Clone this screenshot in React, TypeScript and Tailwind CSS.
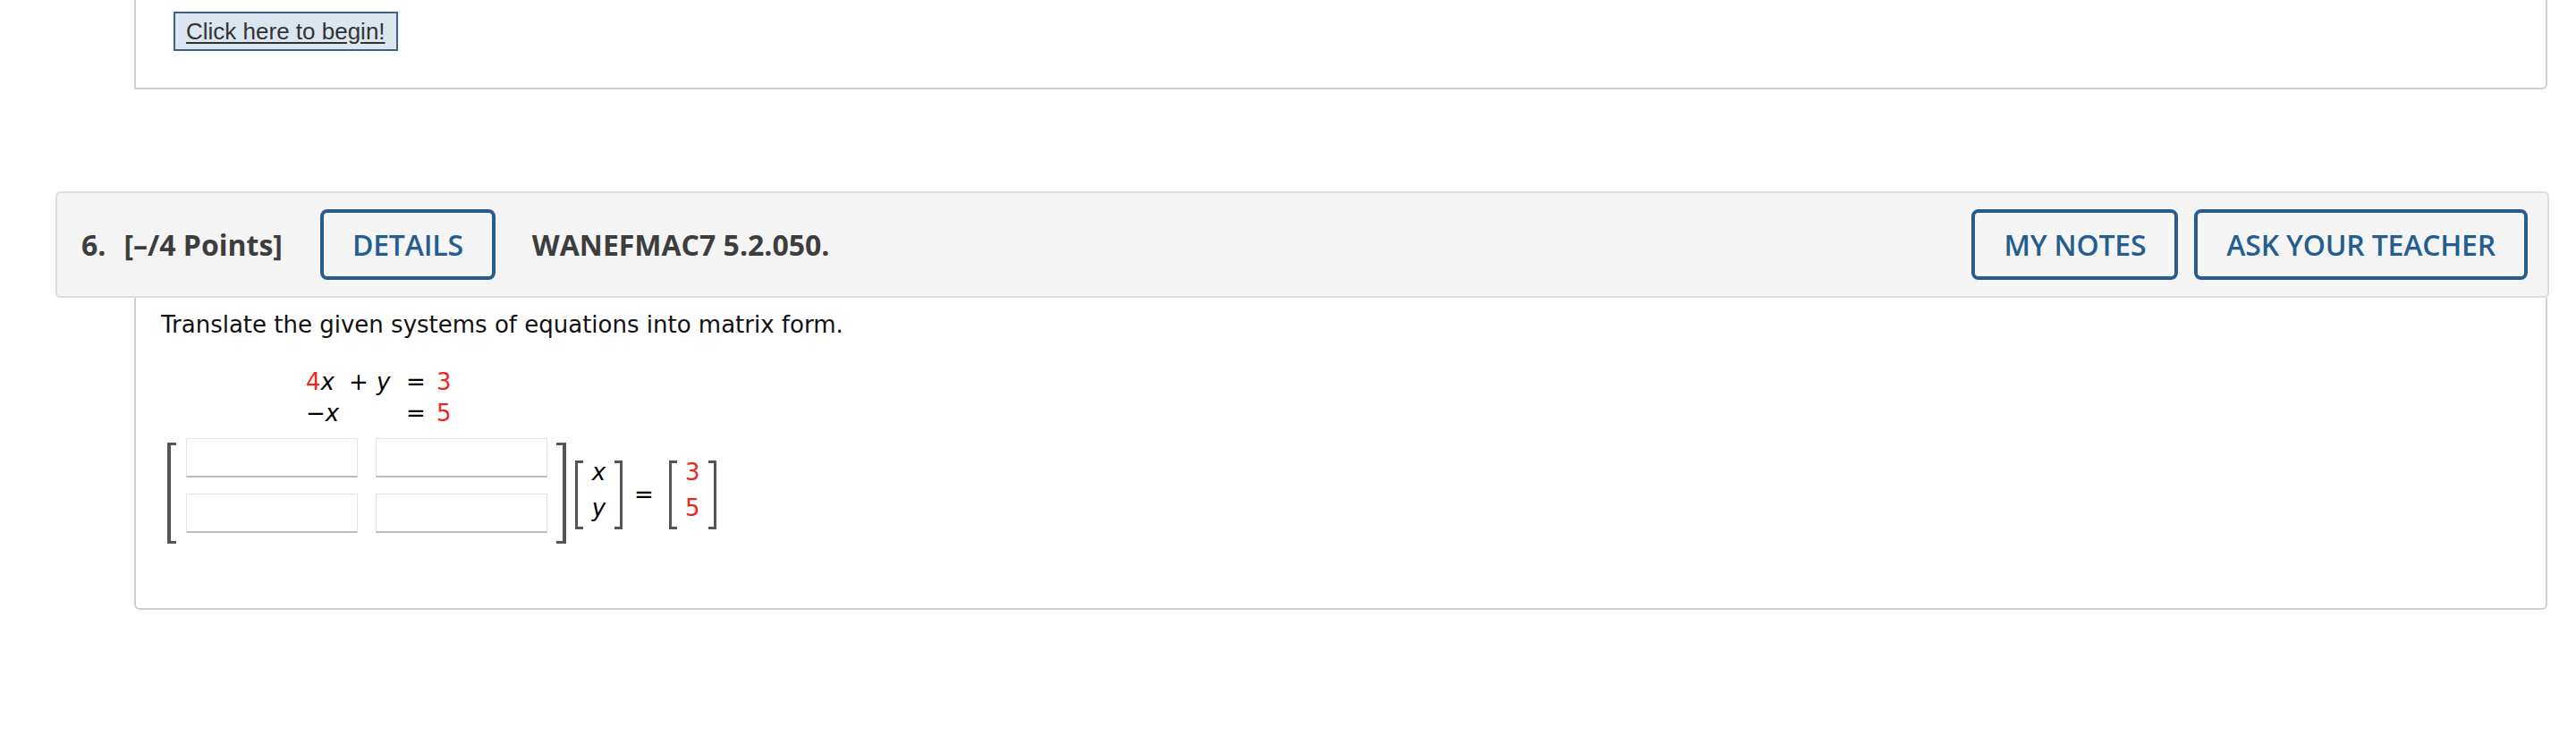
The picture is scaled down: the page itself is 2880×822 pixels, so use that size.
import React from "react";

// Question card: header strip with point value and action buttons, then the
// prompt, the system of equations and the 2x2 matrix answer grid.

const BODY = "font-['DejaVu_Sans',Verdana,sans-serif]";
const HEAD = "font-['Open_Sans',sans-serif]";

function HeaderButton({ label }: { label: string }) {
  return (
    <button className={`${HEAD} h-[79px] px-[32px] border-[4px] border-[#245e91] rounded-[8px] text-[32px] font-semibold text-[#245e91] tracking-[-0.2px] bg-transparent`}>
      {label}
    </button>
  );
}

function AnswerBox() {
  return <div className="h-[44px] bg-white border border-[#e4e4e4] border-b-2 border-b-[#bcbcbc]" />;
}

function Vector({ top, bottom, red }: { top: string; bottom: string; red?: boolean }) {
  const tone = red ? "text-[#ea2a1e]" : "text-black italic";
  return (
    <div className="flex mt-[25px]">
      <div className="w-[9px] h-[77px] border-l-[3px] border-y-[3px] border-[#555]" />
      <div className={`w-[35px] flex flex-col items-center gap-[14px] text-[26px] leading-[26px] ${tone}`}>
        <span>{top}</span>
        <span>{bottom}</span>
      </div>
      <div className="w-[9px] h-[77px] border-r-[3px] border-y-[3px] border-[#555]" />
    </div>
  );
}

export default function App() {
  return (
    <div className="w-[2880px] h-[822px] bg-white overflow-hidden">
      {/* tail of the previous question card */}
      <div className="ml-[150px] w-[2698px] h-[100px] border-x-2 border-b-2 border-[#cfcfcf] rounded-br-[6px] pl-[42px] pt-[13px]">
        <button className="h-[44px] px-[12px] border-2 border-[#3a6190] bg-[#dce6f0] font-['Liberation_Sans',Arial,sans-serif] text-[26px] leading-[30px] text-[#333] underline underline-offset-[3px]">
          Click here to begin!
        </button>
      </div>

      {/* question header */}
      <div className="mt-[114px] ml-[62px] w-[2788px] h-[119px] bg-[#f5f5f5] border-2 border-[#dedede] rounded-[5px] flex items-center pl-[27px] pr-[22px]">
        <span className={`${HEAD} text-[32px] font-bold text-[#3d3d3d]`}>6.</span>
        <span className={`${HEAD} ml-[20px] text-[32px] font-bold text-[#3d3d3d]`}>[–/4 Points]</span>
        <div className="ml-[42px]">
          <HeaderButton label="DETAILS" />
        </div>
        <span className={`${HEAD} ml-[41px] text-[32px] font-bold text-[#3d3d3d]`}>WANEFMAC7 5.2.050.</span>
        <div className="ml-auto flex gap-[18px]">
          <HeaderButton label="MY NOTES" />
          <HeaderButton label="ASK YOUR TEACHER" />
        </div>
      </div>

      {/* question body */}
      <div className={`${BODY} ml-[150px] w-[2698px] h-[349px] border-x-2 border-b-2 border-[#cfcfcf] rounded-b-[6px] pl-[28px] pt-[14px]`}>
        <p className="text-[26px] leading-[32px] text-[#111]">Translate the given systems of equations into matrix form.</p>

        <div className="mt-[31px] ml-[162px] grid grid-cols-[48px_31px_33px_34px_auto] text-[26px] leading-[35px] text-black w-max">
          <span><span className="text-[#ea2a1e]">4</span><i>x</i></span>
          <span>+</span>
          <i>y</i>
          <span>=</span>
          <span className="text-[#ea2a1e]">3</span>
          <span>−<i>x</i></span>
          <span />
          <span />
          <span>=</span>
          <span className="text-[#ea2a1e]">5</span>
        </div>

        <div className="mt-[10px] ml-[7px] flex items-start">
          <div className="mt-[5px] w-[10px] h-[113px] border-l-[4px] border-y-[3px] border-[#555]" />
          <div className="ml-[11px] grid grid-cols-[192px_192px] gap-x-[20px] gap-y-[18px]">
            <AnswerBox />
            <AnswerBox />
            <AnswerBox />
            <AnswerBox />
          </div>
          <div className="ml-[10px] mt-[5px] w-[11px] h-[113px] border-r-[4px] border-y-[3px] border-[#555]" />
          <div className="ml-[10px]">
            <Vector top="x" bottom="y" />
          </div>
          <span className="ml-[13px] mt-[50px] text-[26px] leading-[26px] text-black">=</span>
          <div className="ml-[17px]">
            <Vector top="3" bottom="5" red />
          </div>
        </div>
      </div>
    </div>
  );
}
